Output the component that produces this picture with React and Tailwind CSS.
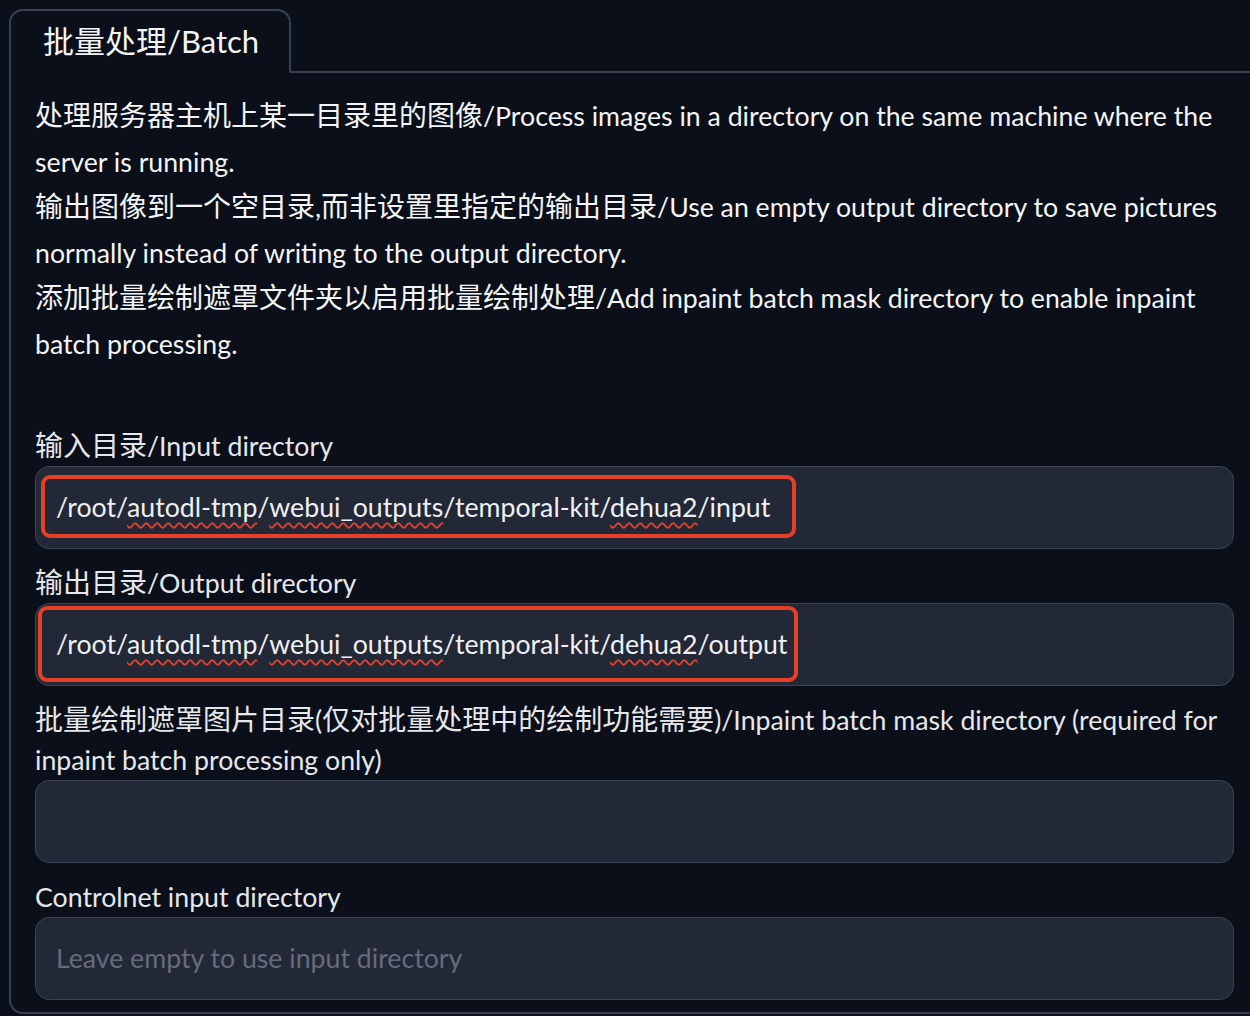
import React from "react";

const CJK = /([\u3000-\u9fff\uff00-\uffef]+)/;

function T({ children }) {
  const parts = String(children).split(CJK);
  return (
    <>
      {parts.map((p, i) =>
        i % 2 === 1 ? (
          <span key={i} className="text-[28px] leading-none">
            {p}
          </span>
        ) : (
          <React.Fragment key={i}>{p}</React.Fragment>
        )
      )}
    </>
  );
}

const W = ({ children }) => (
  <span className="underline decoration-wavy decoration-[#d9432f] decoration-[1.5px] underline-offset-[5px]">
    {children}
  </span>
);

function Field({ label, children, box, placeholder }) {
  return (
    <div className="flex flex-col">
      <div className="text-[26.7px] leading-[40px] text-[#e5e7eb]">
        <T>{label}</T>
      </div>
      <div className="relative h-[83px] rounded-[14px] border border-[#3b4454] bg-[#222836] flex items-center px-5">
        {children ? (
          <div className="text-[26.7px] text-[#eef0f3] whitespace-nowrap">{children}</div>
        ) : placeholder ? (
          <div className="text-[26.7px] text-[#646c7b] whitespace-nowrap">{placeholder}</div>
        ) : null}
        {box}
      </div>
    </div>
  );
}

export default function App() {
  return (
    <div
      className="w-[1250px] h-[1016px] overflow-hidden bg-[#0b0f19]"
      style={{ fontFamily: 'Lato, "Noto Sans CJK SC", sans-serif' }}
    >
      <div className="w-[1262px] pl-[9px] pt-[9px]">
        <div className="flex">
          <div className="w-[282px] h-[64px] border-t-2 border-x-2 border-[#374151] rounded-t-[14px] pl-[32px] pb-[2px] flex items-center text-[31px] text-[#f3f4f6]">
            批量处理/Batch
          </div>
          <div className="flex-1 border-b-2 border-[#374151]" />
        </div>
        <div className="border-x-2 border-b-2 border-[#374151] rounded-b-[14px] pl-[24px] pr-[26px] pt-[21px] pb-[12px]">
          <div className="text-[26.7px] leading-[45.6px] text-[#f3f4f6]">
            <p>
              <T>处理服务器主机上某一目录里的图像/Process images in a directory on the same machine where the server is running.</T>
            </p>
            <p>
              <T>输出图像到一个空目录,而非设置里指定的输出目录/Use an empty output directory to save pictures normally instead of writing to the output directory.</T>
            </p>
            <p>
              <T>添加批量绘制遮罩文件夹以启用批量绘制处理/Add inpaint batch mask directory to enable inpaint batch processing.</T>
            </p>
          </div>
          <div className="mt-[58px] flex flex-col gap-[14px]">
            <Field
              label="输入目录/Input directory"
              box={
                <div className="absolute left-[5px] top-[8px] w-[755px] h-[63px] border-4 border-[#e63f28] rounded-[9px]" />
              }
            >
              /root/<W>autodl-tmp</W>/<W>webui_outputs</W>/temporal-kit/<W>dehua2</W>/input
            </Field>
            <Field
              label="输出目录/Output directory"
              box={
                <div className="absolute left-[2px] top-[2px] w-[760px] h-[76px] border-4 border-[#e63f28] rounded-[9px]" />
              }
            >
              /root/<W>autodl-tmp</W>/<W>webui_outputs</W>/temporal-kit/<W>dehua2</W>/output
            </Field>
            <Field label="批量绘制遮罩图片目录(仅对批量处理中的绘制功能需要)/Inpaint batch mask directory (required for inpaint batch processing only)" />
            <Field label="Controlnet input directory" placeholder="Leave empty to use input directory" />
          </div>
        </div>
      </div>
    </div>
  );
}
